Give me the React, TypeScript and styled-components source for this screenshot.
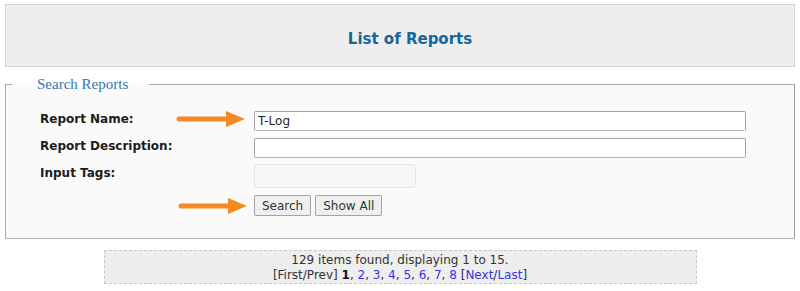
import React from 'react'
import styled, { createGlobalStyle } from 'styled-components'

const GlobalStyle = createGlobalStyle`
    body {
        margin: 0;
        background: #fff;
        font-family: "DejaVu Sans", Verdana, sans-serif;
        color: #222;
    }
`

const Page = styled.div`
    padding: 4px 5px 0;
    width: 790px;
    box-sizing: content-box;
`

const Header = styled.div`
    background: #eeeeee;
    border: 1px solid #cbd7df;
    display: flex;
    align-items: center;
    justify-content: center;
    padding: 6px 0 0 20px;
    box-sizing: border-box;
    height: 63px;
`

const Title = styled.h1`
    margin: 0;
    font-size: 15px;
    font-weight: bold;
    color: #16679a;
`

const SearchBox = styled.fieldset`
    position: relative;
    margin: 9px 0 0;
    padding: 18px 0 22px 34px;
    border: 1px solid #a9a9a9;
    border-right-color: #9a9a9a;
    border-bottom-color: #b5b5b5;
    background: #fafafa;
    min-width: 0;
`

const Legend = styled.legend`
    margin-left: -28px;
    padding: 0 21px 0 25px;
    font-family: "Liberation Serif", Georgia, serif;
    font-size: 15px;
    color: #3577ad;
`

const Form = styled.div`
    display: grid;
    grid-template-columns: 214px 492px;
    row-gap: 7px;
`

const Label = styled.label`
    font-size: 12px;
    font-weight: bold;
    color: #1c1c1c;
    padding-top: 1px;
`

const TextInput = styled.input`
    height: 20px;
    box-sizing: border-box;
    border: 1px solid #a5a5a5;
    border-bottom-color: #b8b8b8;
    border-radius: 2px;
    background: #fff;
    padding: 0 3px;
    font-family: "DejaVu Sans", Verdana, sans-serif;
    font-size: 12px;
    color: #222;
`

const TagsBox = styled.div`
    width: 162px;
    height: 24px;
    box-sizing: border-box;
    border: 1px solid #e6e6e6;
    border-radius: 4px;
    background: #f6f6f6;
    margin-top: -1px;
`

const Buttons = styled.div`
    grid-column: 2;
    display: flex;
    gap: 4px;
`

const Button = styled.button`
    height: 21px;
    padding: 0 7px;
    border: 1px solid #a3a3a3;
    border-radius: 2px;
    background: #efefef;
    font-family: "DejaVu Sans", Verdana, sans-serif;
    font-size: 12px;
    color: #333;
    cursor: pointer;
`

const Arrow = styled.svg<{ $top: number; $left: number }>`
    position: absolute;
    top: ${p => p.$top}px;
    left: ${p => p.$left}px;
`

const Pager = styled.div`
    width: 593px;
    margin: 11px auto 0;
    box-sizing: border-box;
    height: 34px;
    padding-top: 2px;
    background: #eeeeee;
    border: 1px dashed #c9c9c9;
    text-align: center;
    font-size: 12px;
    line-height: 15px;
    color: #333;
`

const PageLink = styled.a`
    color: #3434e8;
    text-decoration: none;
`

const Current = styled.b`
    color: #111;
`

const OrangeArrow = ({ top, left }: { top: number; left: number }) => (
    <Arrow $top={top} $left={left} width="70" height="18" viewBox="0 0 70 18">
        <line x1="3" y1="9" x2="54" y2="9" stroke="#f58a23" strokeWidth="5" strokeLinecap="round" />
        <polygon points="50,1 69,9 50,17" fill="#f58a23" />
    </Arrow>
)

const pages = [2, 3, 4, 5, 6, 7, 8]

export default function App() {
    return (
        <Page>
            <GlobalStyle />
            <Header>
                <Title>List of Reports</Title>
            </Header>
            <SearchBox>
                <Legend>Search Reports</Legend>
                <OrangeArrow top={17} left={170} />
                <OrangeArrow top={104} left={172} />
                <Form>
                    <Label>Report Name:</Label>
                    <TextInput defaultValue="T-Log" />
                    <Label>Report Description:</Label>
                    <TextInput />
                    <Label>Input Tags:</Label>
                    <TagsBox />
                    <Buttons>
                        <Button>Search</Button>
                        <Button>Show All</Button>
                    </Buttons>
                </Form>
            </SearchBox>
            <Pager>
                129 items found, displaying 1 to 15.
                <br />
                [First/Prev] <Current>1</Current>
                {pages.map(n => (
                    <React.Fragment key={n}>
                        , <PageLink href="#">{n}</PageLink>
                    </React.Fragment>
                ))}{' '}
                [<PageLink href="#">Next</PageLink>/<PageLink href="#">Last</PageLink>]
            </Pager>
        </Page>
    )
}
